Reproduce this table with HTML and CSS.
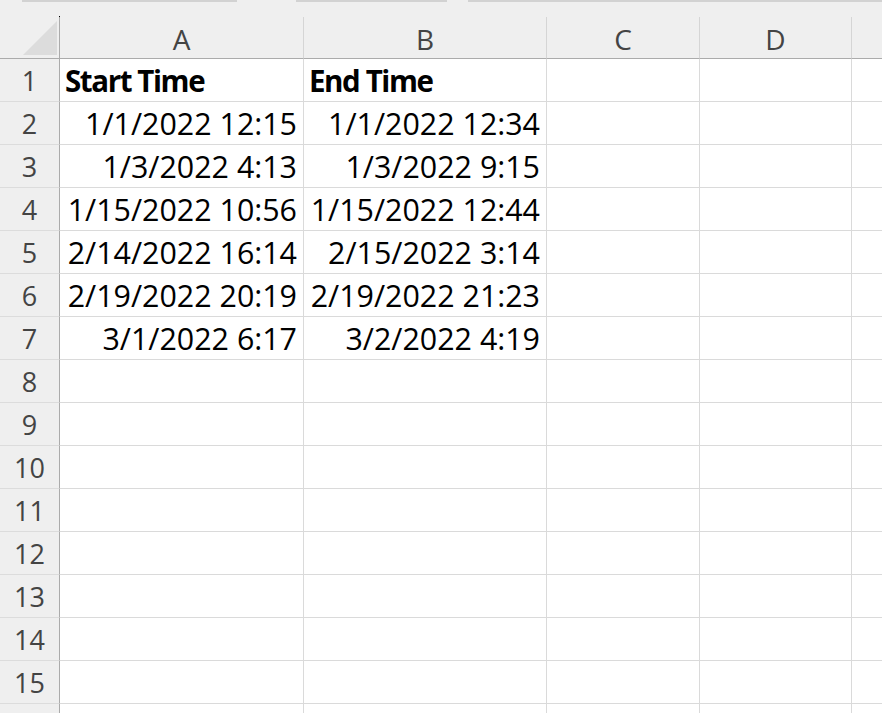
FILE: index.html
```html
<!DOCTYPE html>
<html>
<head>
<meta charset="utf-8">
<link rel="stylesheet" href="styles.css">
</head>
<body>
<div class="sheet">
  <div class="topbar">
    <span class="gap g1"></span><span class="seg s1"></span><span class="gap g2"></span><span class="seg s2"></span><span class="gap g3"></span><span class="seg s3"></span>
  </div>
  <div class="grid">
    <div class="corner"><svg width="34" height="34" viewBox="0 0 34 34"><polygon points="34,0 34,34 0,34" fill="#dcdcdc"/></svg></div>
    <div class="ch">A</div><div class="ch">B</div><div class="ch">C</div><div class="ch">D</div><div class="ch last"></div>

    <div class="rh">1</div><div class="c b">Start Time</div><div class="c b">End Time</div><div class="c"></div><div class="c"></div><div class="c last"></div>
    <div class="rh">2</div><div class="c n">1/1/2022 12:15</div><div class="c n">1/1/2022 12:34</div><div class="c"></div><div class="c"></div><div class="c last"></div>
    <div class="rh">3</div><div class="c n">1/3/2022 4:13</div><div class="c n">1/3/2022 9:15</div><div class="c"></div><div class="c"></div><div class="c last"></div>
    <div class="rh">4</div><div class="c n">1/15/2022 10:56</div><div class="c n">1/15/2022 12:44</div><div class="c"></div><div class="c"></div><div class="c last"></div>
    <div class="rh">5</div><div class="c n">2/14/2022 16:14</div><div class="c n">2/15/2022 3:14</div><div class="c"></div><div class="c"></div><div class="c last"></div>
    <div class="rh">6</div><div class="c n">2/19/2022 20:19</div><div class="c n">2/19/2022 21:23</div><div class="c"></div><div class="c"></div><div class="c last"></div>
    <div class="rh">7</div><div class="c n">3/1/2022 6:17</div><div class="c n">3/2/2022 4:19</div><div class="c"></div><div class="c"></div><div class="c last"></div>
    <div class="rh">8</div><div class="c"></div><div class="c"></div><div class="c"></div><div class="c"></div><div class="c last"></div>
    <div class="rh">9</div><div class="c"></div><div class="c"></div><div class="c"></div><div class="c"></div><div class="c last"></div>
    <div class="rh">10</div><div class="c"></div><div class="c"></div><div class="c"></div><div class="c"></div><div class="c last"></div>
    <div class="rh">11</div><div class="c"></div><div class="c"></div><div class="c"></div><div class="c"></div><div class="c last"></div>
    <div class="rh">12</div><div class="c"></div><div class="c"></div><div class="c"></div><div class="c"></div><div class="c last"></div>
    <div class="rh">13</div><div class="c"></div><div class="c"></div><div class="c"></div><div class="c"></div><div class="c last"></div>
    <div class="rh">14</div><div class="c"></div><div class="c"></div><div class="c"></div><div class="c"></div><div class="c last"></div>
    <div class="rh">15</div><div class="c"></div><div class="c"></div><div class="c"></div><div class="c"></div><div class="c last"></div>
    <div class="rh"></div><div class="c"></div><div class="c"></div><div class="c"></div><div class="c"></div><div class="c last"></div>
  </div>
</div>
</body>
</html>
```

FILE: styles.css
```css
html, body {
  margin: 0;
  padding: 0;
  background: #ffffff;
  overflow: hidden;
}
.sheet {
  width: 882px;
  height: 713px;
  overflow: hidden;
  font-family: "Open Sans", "Noto Sans", sans-serif;
}
.topbar {
  height: 17px;
  background: #efefef;
  display: flex;
  align-items: flex-start;
}
.topbar .seg, .topbar .gap {
  height: 2px;
  display: block;
}
.topbar .seg { background: #d2d2d2; }
.g1 { width: 22px; }
.s1 { width: 215px; }
.g2 { width: 59px; }
.s2 { width: 151px; }
.g3 { width: 21px; }
.s3 { flex: 1; }
.grid {
  display: grid;
  grid-template-columns: 60px 244px 243px 153px 152px 1fr;
  grid-template-rows: 42px repeat(16, 43px);
}
.corner {
  position: relative;
  background: #efefef;
  border-right: 1px solid #ababab;
  border-bottom: 1px solid #ababab;
  display: flex;
  justify-content: flex-end;
  align-items: flex-end;
  padding: 0 2px 3px 0;
}
.corner::after {
  content: "";
  position: absolute;
  right: -1px;
  top: -1px;
  width: 1px;
  height: 1px;
  background: #000;
}
.corner svg { display: block; }
.ch {
  background: #efefef;
  border-right: 1px solid #d5d5d5;
  border-bottom: 1px solid #ababab;
  display: flex;
  align-items: center;
  justify-content: center;
  font-size: 28px;
  color: #444444;
  padding-top: 2px;
}
.rh {
  background: #efefef;
  border-right: 1px solid #ababab;
  border-bottom: 1px solid #dcdcdc;
  display: flex;
  align-items: center;
  justify-content: center;
  font-size: 27px;
  color: #444444;
  padding-top: 1px;
}
.c {
  border-right: 1px solid #dadada;
  border-bottom: 1px solid #dadada;
  display: flex;
  align-items: center;
  font-size: 30.4px;
  color: #000000;
  white-space: nowrap;
  padding: 1px 6px 0 6px;
}
.c.n {
  justify-content: flex-end;
}
.c.b {
  font-size: 29.5px;
  font-weight: 700;
  letter-spacing: -1.4px;
  padding-left: 5px;
}
.last { border-right: none; }
```
